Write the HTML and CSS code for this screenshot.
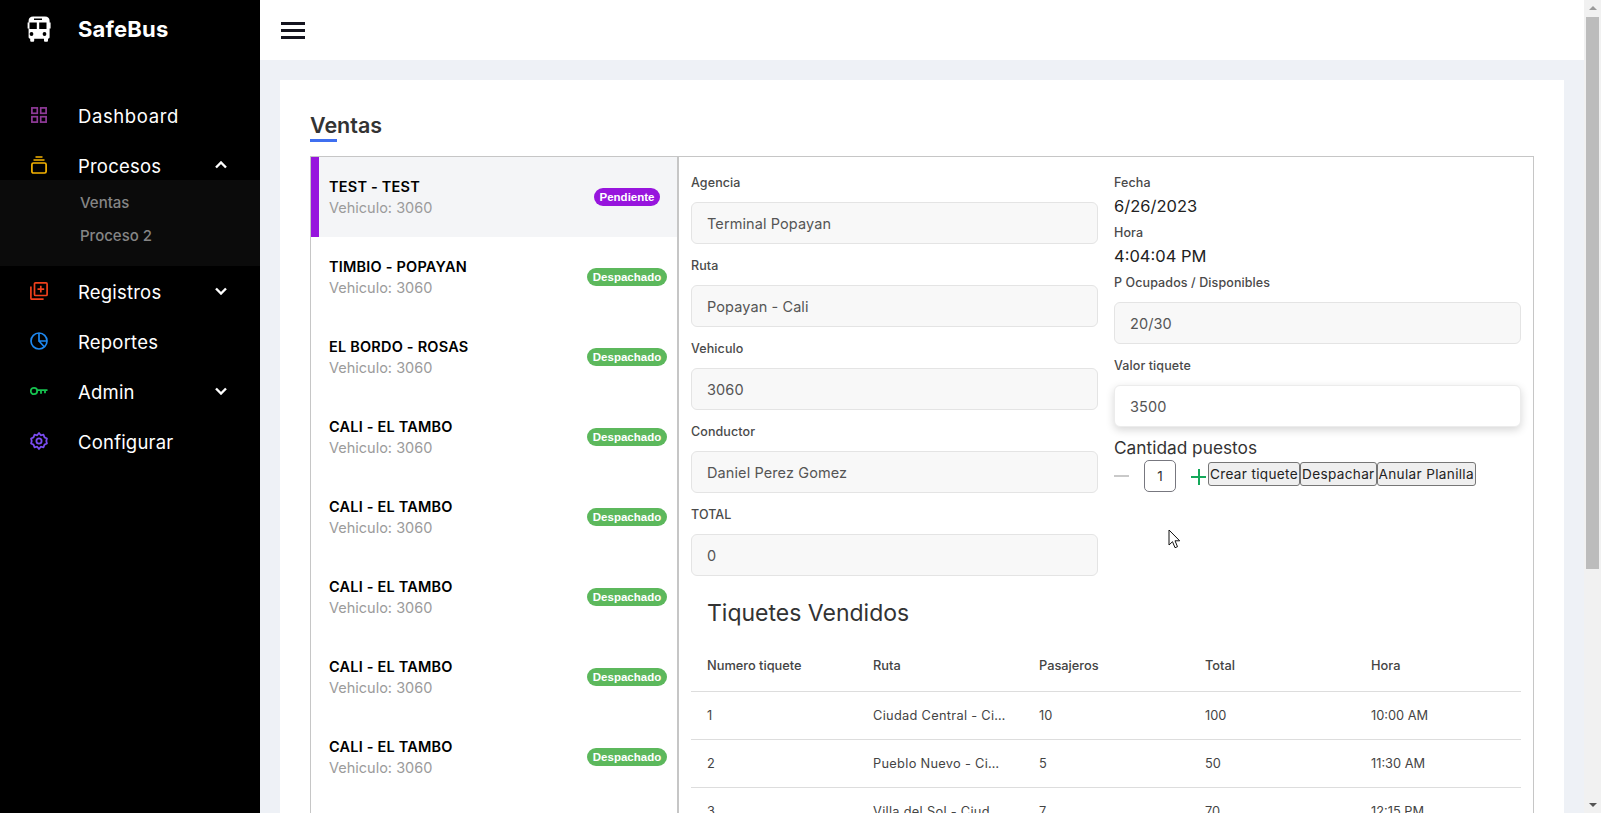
FILE: index.html
```html
<!DOCTYPE html>
<html lang="es">
<head>
<meta charset="utf-8">
<title>SafeBus</title>
<link rel="stylesheet" href="styles.css">
</head>
<body>
<div class="app">
  <aside class="sidebar">
    <div class="brand">
      <svg class="bus" viewBox="0 0 26 26" width="26" height="26"><path fill="#fff" d="M6 0.5h14c3 0 4.6 1.8 4.6 4.4v1.6h1v6h-1v8.500c0 1-.6 1.700-1.600 1.700v1.800c0 .8-.5 1.300-1.300 1.300h-1.400c-.8 0-1.300-.5-1.300-1.300v-1.800h-9.800v1.800c0 .8-.5 1.300-1.300 1.300h-1.400c-.8 0-1.300-.5-1.300-1.300v-1.800c-1 0-1.600-.7-1.600-1.700v-8.500h-1v-6h1v-1.600c0-2.600 1.600-4.400 4.600-4.400z"/><path fill="#000" d="M9 2.500h8v1.600h-8zM4.500 6.500h7.300v6.500h-7.300zM14.200 6.500h7.300v6.500h-7.300z"/><circle cx="6.500" cy="18" r="1.900" fill="#000"/><circle cx="19.500" cy="18" r="1.900" fill="#000"/></svg>
      <span class="brand-name">SafeBus</span>
    </div>
    <nav class="nav">
      <a class="nav-item"><span class="nav-icon"><svg viewBox="0 0 16 16" width="16" height="16" fill="none" stroke="#8f3a98" stroke-width="1.700"><rect x=".9" y=".9" width="5.400" height="5.400"/><rect x="9.700" y=".9" width="5.400" height="5.400"/><rect x=".9" y="9.700" width="5.400" height="5.400"/><rect x="9.700" y="9.700" width="5.400" height="5.400"/></svg></span><span class="nav-label dash">Dashboard</span></a>
      <a class="nav-item"><span class="nav-icon"><svg viewBox="0 0 16 18" width="16" height="18" fill="none" stroke="#f5b301" stroke-width="1.700"><path d="M4.500 1h7M2.500 4h11"/><rect x=".9" y="7" width="14.200" height="10" rx="1.500"/></svg></span><span class="nav-label">Procesos</span><svg class="chev" viewBox="0 0 12 8" width="12" height="8" fill="none" stroke="#fff" stroke-width="2.400"><path d="M1 6.500l5-5 5 5"/></svg></a>
      <div class="subnav">
        <a class="sub-item">Ventas</a>
        <a class="sub-item">Proceso 2</a>
      </div>
      <a class="nav-item"><span class="nav-icon"><svg viewBox="0 0 18 18" width="18" height="18" fill="none" stroke="#f0401c" stroke-width="1.700"><rect x="4.500" y=".9" width="12.600" height="12.600" rx="1"/><path d="M10.800 3.800v6.700M7.500 7.100h6.700"/><path d="M.9 4.500v11.700c0 .6.400 1 1 1h11.700"/></svg></span><span class="nav-label">Registros</span><svg class="chev" viewBox="0 0 12 8" width="12" height="8" fill="none" stroke="#fff" stroke-width="2.400"><path d="M1 1.500l5 5 5-5"/></svg></a>
      <a class="nav-item"><span class="nav-icon"><svg viewBox="0 0 18 18" width="18" height="18" fill="none" stroke="#1e88f0" stroke-width="1.700"><circle cx="9" cy="9" r="8"/><path d="M9 1v8h8M9 9l5.500 6"/></svg></span><span class="nav-label">Reportes</span></a>
      <a class="nav-item"><span class="nav-icon"><svg viewBox="0 0 18 10" width="18" height="10" fill="none" stroke="#16c24f" stroke-width="1.800"><circle cx="4" cy="5" r="3.200"/><path d="M7.200 4.200h10.300M11 4.200v3.600M15 4.200v3"/></svg></span><span class="nav-label">Admin</span><svg class="chev" viewBox="0 0 12 8" width="12" height="8" fill="none" stroke="#fff" stroke-width="2.400"><path d="M1 1.500l5 5 5-5"/></svg></a>
      <a class="nav-item"><span class="nav-icon"><svg viewBox="0 0 18 18" width="18" height="18" fill="none" stroke="#7a4cf0" stroke-width="1.800" stroke-linejoin="round"><path d="M9 1l1.800 2.300 2.700-.6 1 2.700 2.400 1.100-.6 2.500.6 2.500-2.400 1.100-1 2.700-2.700-.6-1.800 2.300-1.800-2.300-2.700.6-1-2.700-2.400-1.100.6-2.500-.6-2.500 2.400-1.100 1-2.700 2.700.6z"/><circle cx="9" cy="9" r="2.600"/></svg></span><span class="nav-label">Configurar</span></a>
    </nav>
  </aside>

  <div class="main">
    <header class="topbar">
      <div class="burger"><span></span><span></span><span></span></div>
    </header>
    <div class="content">
      <section class="card">
        <h1 class="page-title">Ventas</h1>
        <div class="panel">
          <ul class="trips">
            <li class="trip active"><div class="trip-text"><div class="trip-name">TEST - TEST</div><div class="trip-sub">Vehiculo: 3060</div></div><div class="badge-slot"><span class="badge pending">Pendiente</span></div></li>
            <li class="trip"><div class="trip-text"><div class="trip-name">TIMBIO - POPAYAN</div><div class="trip-sub">Vehiculo: 3060</div></div><div class="badge-slot"><span class="badge done">Despachado</span></div></li>
            <li class="trip"><div class="trip-text"><div class="trip-name">EL BORDO - ROSAS</div><div class="trip-sub">Vehiculo: 3060</div></div><div class="badge-slot"><span class="badge done">Despachado</span></div></li>
            <li class="trip"><div class="trip-text"><div class="trip-name">CALI - EL TAMBO</div><div class="trip-sub">Vehiculo: 3060</div></div><div class="badge-slot"><span class="badge done">Despachado</span></div></li>
            <li class="trip"><div class="trip-text"><div class="trip-name">CALI - EL TAMBO</div><div class="trip-sub">Vehiculo: 3060</div></div><div class="badge-slot"><span class="badge done">Despachado</span></div></li>
            <li class="trip"><div class="trip-text"><div class="trip-name">CALI - EL TAMBO</div><div class="trip-sub">Vehiculo: 3060</div></div><div class="badge-slot"><span class="badge done">Despachado</span></div></li>
            <li class="trip"><div class="trip-text"><div class="trip-name">CALI - EL TAMBO</div><div class="trip-sub">Vehiculo: 3060</div></div><div class="badge-slot"><span class="badge done">Despachado</span></div></li>
            <li class="trip"><div class="trip-text"><div class="trip-name">CALI - EL TAMBO</div><div class="trip-sub">Vehiculo: 3060</div></div><div class="badge-slot"><span class="badge done">Despachado</span></div></li>
          </ul>
          <div class="detail">
            <div class="form-grid">
              <div class="col">
                <div class="field"><label class="label">Agencia</label><div class="input">Terminal Popayan</div></div>
                <div class="field"><label class="label">Ruta</label><div class="input">Popayan - Cali</div></div>
                <div class="field"><label class="label">Vehiculo</label><div class="input">3060</div></div>
                <div class="field"><label class="label">Conductor</label><div class="input">Daniel Perez Gomez</div></div>
                <div class="field"><label class="label">TOTAL</label><div class="input">0</div></div>
              </div>
              <div class="col">
                <div class="info"><div class="label">Fecha</div><div class="value">6/26/2023</div></div>
                <div class="info"><div class="label">Hora</div><div class="value">4:04:04 PM</div></div>
                <div class="field"><label class="label">P Ocupados / Disponibles</label><div class="input">20/30</div></div>
                <div class="field"><label class="label">Valor tiquete</label><div class="input live">3500</div></div>
                <div class="qty-title">Cantidad puestos</div>
                <div class="actions">
                  <span class="minus"></span>
                  <span class="qty">1</span>
                  <span class="plus"></span>
                  <button class="btn">Crear tiquete</button><button class="btn">Despachar</button><button class="btn">Anular Planilla</button>
                </div>
              </div>
            </div>
            <h2 class="sold-title">Tiquetes Vendidos</h2>
            <table class="sold">
              <thead><tr><th>Numero tiquete</th><th>Ruta</th><th>Pasajeros</th><th>Total</th><th>Hora</th></tr></thead>
              <tbody>
                <tr><td>1</td><td><span class="clip">Ciudad Central - Ciudad Norte</span></td><td>10</td><td>100</td><td>10:00 AM</td></tr>
                <tr><td>2</td><td><span class="clip">Pueblo Nuevo - Ciudad Sur</span></td><td>5</td><td>50</td><td>11:30 AM</td></tr>
                <tr><td>3</td><td><span class="clip">Villa del Sol - Ciudad Este</span></td><td>7</td><td>70</td><td>12:15 PM</td></tr>
              </tbody>
            </table>
          </div>
        </div>
      </section>
    </div>
    <svg class="cursor" viewBox="0 0 13 20" width="13" height="20"><path d="M1 1v15l3.500-3.300 2.500 6 2.500-1-2.500-5.900h4.700z" fill="#fff" stroke="#111" stroke-width="1"/></svg>
  </div>

  <div class="scrollbar">
    <span class="arrow up"></span>
    <div class="thumb"></div>
    <span class="arrow down"></span>
  </div>
</div>
</body>
</html>
```
FILE: styles.css
```css
* { box-sizing: border-box; }
html, body { margin: 0; height: 100%; overflow: hidden; }
body { font-family: Inter, "Open Sans", sans-serif; color: #333; background: #eef1f6; }

.app { display: flex; height: 813px; overflow: hidden; }

/* sidebar */
.sidebar { width: 260px; flex: none; background: #000; color: #fff; }
.brand { height: 58px; display: flex; align-items: center; padding-left: 25px; }
.bus { flex: none; }
.brand-name { margin-left: 27px; font-size: 22px; font-weight: 700; letter-spacing: .2px; }
.nav { margin-top: 32px; }
.nav-item { display: flex; align-items: center; height: 50px; padding-left: 30px; padding-right: 33px; }
.nav-icon { width: 18px; display: flex; justify-content: center; flex: none; margin-right: 30px; }
.nav-label { flex: 1; padding-top: 1px; font-size: 18.500px; font-weight: 400; letter-spacing: .2px; }
.nav-label.dash { letter-spacing: .6px; }
.chev { flex: none; }
.subnav { background: #0b0b0b; height: 86px; margin-top: -10px; padding: 6px 0 0 80px; }
.sub-item { display: block; height: 33px; line-height: 33px; font-size: 15px; font-weight: 500; color: #858585; }

/* main */
.main { flex: 1; min-width: 0; position: relative; display: flex; flex-direction: column; }
.topbar { height: 60px; flex: none; background: #fff; display: flex; align-items: center; padding-left: 21px; }
.burger { width: 24px; display: flex; flex-direction: column; gap: 4px; }
.burger span { height: 3px; background: #14141f; }
.content { flex: 1; padding: 20px 20px 0; overflow: hidden; }
.card { background: #fff; height: 100%; padding: 30px 30px 0; }
.page-title { margin: 0; width: 27px; white-space: nowrap; height: 32px; font-size: 21.500px; font-weight: 600; line-height: 31px; color: #333; border-bottom: 3px solid #3f6ff0; }
.panel { margin-top: 14px; display: flex; border: 1px solid #c6c6c6; height: 800px; }

/* trips */
.trips { list-style: none; margin: 0; padding: 0; width: 368px; flex: none; border-right: 2px solid #c6c6c6; }
.trip { height: 80px; display: flex; align-items: center; padding: 0 10px 0 10px; border-left: 8px solid transparent; }
.trip.active { background: #f4f5f7; border-left-color: #9715dd; }
.trip-text { flex: 1; min-width: 0; }
.trip-name { font-size: 14.500px; font-weight: 600; line-height: 21px; color: #000; letter-spacing: .2px; white-space: nowrap; }
.trip-sub { font-size: 14.500px; line-height: 21px; color: #9b9b9b; }
.badge-slot { width: 80px; display: flex; justify-content: center; flex: none; }
.badge { display: block; height: 18px; padding: 0 5.500px; border-radius: 9px; color: #fff; font: bold 11.500px/18px "Liberation Sans", Arial, sans-serif; }
.badge.pending { background: #9715dd; }
.badge.done { background: #5cb85c; }

/* form */
.detail { flex: 1; min-width: 0; padding: 16px 12px 0; }
.form-grid { display: grid; grid-template-columns: 407px 407px; gap: 16px; justify-content: start; }
.label { display: block; height: 20px; line-height: 20px; font-size: 12.500px; font-weight: 500; color: #4a4a4a; letter-spacing: .1px; }
.field { height: 83px; }
.input { height: 42px; margin-top: 9px; padding-left: 15px; line-height: 41px; font-size: 14.500px; letter-spacing: .1px; color: #555; background: #f8f8f8; border: 1px solid #e4e4e4; border-radius: 6px; }
.input.live { background: #fff; border-color: #ececec; box-shadow: 0 3px 8px rgba(0,0,0,.16); }
.info { height: 50px; }
.value { height: 26px; line-height: 26px; font-size: 16.500px; color: #222; }
.qty-title { font-size: 17.300px; line-height: 22px; color: #333; margin-top: -2px; }
.actions { display: flex; align-items: flex-start; margin-top: 1px; height: 34px; }
.minus { width: 15px; height: 2px; background: #c9c9c9; margin: 15px 15px 0 0; flex: none; }
.qty { width: 32px; height: 32px; border: 1px solid #77777f; border-radius: 5px; text-align: center; line-height: 30px; font-size: 13.500px; color: #333; flex: none; }
.plus { width: 15px; height: 16px; margin: 9px 2px 0 15px; flex: none; background: linear-gradient(#14a85a,#14a85a) center/15px 2px no-repeat, linear-gradient(#14a85a,#14a85a) center/2px 16px no-repeat; }
.btn { height: 24px; margin: 2px 0 0; padding: 0 1px; font: 13.600px Inter, sans-serif; letter-spacing: .33px; color: #222; background: #efefef; border: 1px solid #767676; border-radius: 3px; white-space: nowrap; }

/* table */
.sold-title { margin: 9px 0 0 16px; font-size: 23px; font-weight: 400; line-height: 32px; color: #333; }
.sold { margin-top: 9px; width: 830px; table-layout: fixed; border-collapse: collapse; font-size: 12.800px; color: #444; }
.sold th { height: 53px; padding: 2px 16px 0; text-align: left; font-weight: 500; border-bottom: 1px solid #ddd; }
.sold td { height: 48px; padding: 0 16px; border-bottom: 1px solid #ddd; }
.clip { display: block; overflow: hidden; white-space: nowrap; text-overflow: ellipsis; letter-spacing: .3px; }

.cursor { position: absolute; left: 908px; top: 529px; }

/* scrollbar */
.scrollbar { width: 17px; flex: none; background: #f1f1f1; position: relative; }
.thumb { position: absolute; left: 2px; top: 17px; width: 13px; height: 552px; background: #bcbcbc; }
.arrow { position: absolute; left: 5px; width: 0; height: 0; border-left: 4px solid transparent; border-right: 4px solid transparent; }
.arrow.up { top: 6px; border-bottom: 4px solid #9a9a9a; }
.arrow.down { bottom: 6px; border-top: 4px solid #555; }
```
